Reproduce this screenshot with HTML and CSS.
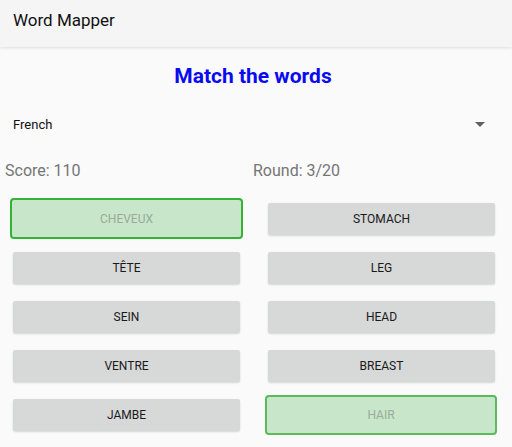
FILE: index.html
```html
<!DOCTYPE html>
<html lang="en">

<head>
    <meta charset="UTF-8">
    <meta name="viewport" content="width=device-width, initial-scale=1.0">
    <title>Word Mapper</title>
    <link rel="stylesheet" href="styles.css">
</head>

<body>
    <div class="app-bar">Word Mapper</div>

    <h1 class="page-title">Match the words</h1>

    <!-- language picker -->
    <div class="lang-select">
        <span>French</span>
        <span class="arrow"></span>
    </div>

    <div class="stats">
        <span>Score: 110</span>
        <span>Round: 3/20</span>
    </div>

    <div class="word-grid">
        <button class="word-btn matched">Cheveux</button>
        <button class="word-btn">Stomach</button>
        <button class="word-btn">Tête</button>
        <button class="word-btn">Leg</button>
        <button class="word-btn">Sein</button>
        <button class="word-btn">Head</button>
        <button class="word-btn">Ventre</button>
        <button class="word-btn">Breast</button>
        <button class="word-btn">Jambe</button>
        <button class="word-btn matched">Hair</button>
    </div>
</body>

</html>
```

FILE: styles.css
```css
body {
    margin: 0;
    padding-bottom: 12px;
    background-color: #fafafa;
    font-family: Roboto, "Liberation Sans", sans-serif;
    color: #111;
}

.app-bar {
    box-sizing: border-box;
    height: 47px;
    padding: 10px 13px 0;
    font-size: 17px;
    background-color: #f5f5f5;
    box-shadow: 0 1px 3px rgba(0, 0, 0, 0.12);
}

.page-title {
    margin: 17px 0 0;
    padding-right: 6px;
    font-size: 21px;
    line-height: 24px;
    font-weight: bold;
    text-align: center;
    color: #0a0af2;
}

.lang-select {
    display: flex;
    justify-content: space-between;
    align-items: center;
    height: 32px;
    margin-top: 20px;
    padding: 0 27px 0 13px;
    font-size: 13px;
}

.arrow {
    width: 0;
    height: 0;
    border-left: 5px solid transparent;
    border-right: 5px solid transparent;
    border-top: 5px solid #616161;
}

.stats {
    display: grid;
    grid-template-columns: 248px 1fr;
    margin-top: 21px;
    padding-left: 5px;
    font-size: 16px;
    line-height: 20px;
    color: #757575;
}

.word-grid {
    display: grid;
    grid-template-columns: 1fr 1fr;
    grid-auto-rows: 32px;
    column-gap: 28px;
    row-gap: 17px;
    margin-top: 22px;
    padding: 0 17px 0 13px;
}

.word-btn {
    border: none;
    border-radius: 2px;
    background-color: #d7d8d8;
    box-shadow: 0 1px 2px rgba(0, 0, 0, 0.15);
    font-family: Roboto, "Liberation Sans", sans-serif;
    font-size: 12px;
    font-weight: normal;
    text-transform: uppercase;
    color: #1a1a1a;
}

.word-btn.matched {
    margin: -5px -3px -4px;
    border: 2px solid #34b234;
    border-radius: 4px;
    background-color: #c8e6c9;
    box-shadow: none;
    color: #9aaa9b;
}

.word-btn.matched:last-child {
    margin: -4px -2px -4px -3px;
    border-color: #5cba5c;
}
```
